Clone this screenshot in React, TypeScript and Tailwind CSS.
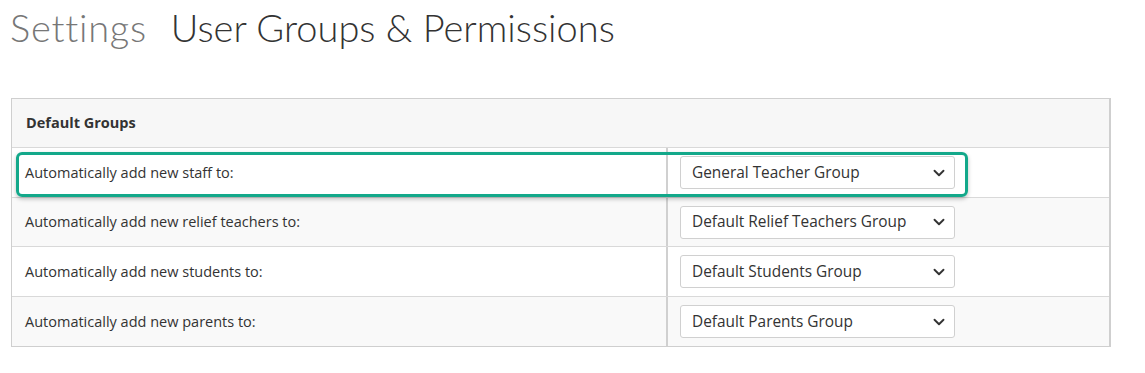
import { ChevronDown } from 'lucide-react'

const rows = [
  { label: 'Automatically add new staff to:', value: 'General Teacher Group' },
  { label: 'Automatically add new relief teachers to:', value: 'Default Relief Teachers Group' },
  { label: 'Automatically add new students to:', value: 'Default Students Group' },
  { label: 'Automatically add new parents to:', value: 'Default Parents Group' },
]

function GroupSelect({ value }: { value: string }) {
  return (
    <div className="flex h-[33px] w-[275px] items-center justify-between rounded-[3px] border border-[#d0d0d0] bg-white pl-[11px] pr-[6px] text-[15.4px] text-[#333]">
      <span>{value}</span>
      <ChevronDown size={18} strokeWidth={2.5} className="text-[#333]" />
    </div>
  )
}

export default function App() {
  return (
    <div className="relative min-h-[373px] bg-white font-['Open_Sans',sans-serif]">
      <h1 className="flex items-baseline gap-[24px] pl-[10px] pt-[1px] font-['Lato',sans-serif] text-[38px] font-light leading-[52px]">
        <span className="tracking-[0.75px] text-[#777]">Settings</span>
        <span className="text-[#333]">User Groups &amp; Permissions</span>
      </h1>

      <div className="relative ml-[11px] mt-[45px] w-[1100px] border border-r-2 border-[#cfcfcf]">
        <div className="flex h-[48px] items-center bg-[#f7f7f7] pl-[14px] text-[14.5px] font-bold text-[#333]">
          Default Groups
        </div>
        {rows.map((row, i) => (
          <div
            key={row.label}
            className={`flex border-t border-[#d9d9d9] ${i === 1 ? 'h-[49px]' : 'h-[50px]'} ${i % 2 === 1 ? 'bg-[#f9f9f9]' : 'bg-white'}`}
          >
            <div className="flex w-[656px] items-center border-r-2 border-[#d0d0d0] pl-[13px] text-[14.5px] text-[#333]">
              {row.label}
            </div>
            <div className="flex flex-1 items-center pl-[12px]">
              <GroupSelect value={row.value} />
            </div>
          </div>
        ))}

        {/* highlight annotation */}
        <div className="pointer-events-none absolute left-[4px] top-[53px] h-[45px] w-[952px] rounded-[6px] border-[3px] border-[#13a88a] shadow-[0_2px_4px_rgba(0,0,0,0.25)]" />
      </div>
    </div>
  )
}
